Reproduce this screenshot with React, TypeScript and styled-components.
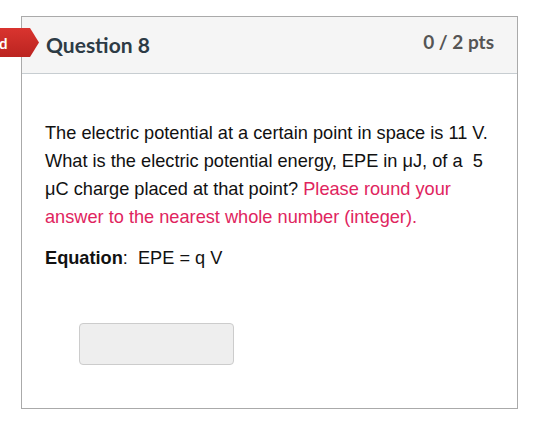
import React from 'react'
import styled, { createGlobalStyle } from 'styled-components'

const Global = createGlobalStyle`
  html, body {
    margin: 0;
    padding: 0;
    background: #fff;
  }
  body {
    font-family: "Liberation Sans", Arial, sans-serif;
  }
`

const Page = styled.div`
  position: relative;
  width: 542px;
  height: 425px;
  padding: 16px 0 0 21px;
  box-sizing: border-box;
`

// the cut-off "submitted" flag poking out of the left edge
const Badge = styled.div`
  position: absolute;
  left: 0;
  top: 28px;
  height: 29px;
  width: 39px;
  display: flex;
  align-items: center;
  box-sizing: border-box;
  background: linear-gradient(#d9342f, #bb2420);
  clip-path: polygon(0 0, 30px 0, 39px 50%, 30px 100%, 0 100%);
  color: #fff;
  font-family: Lato, sans-serif;
  font-weight: 700;
  font-size: 15px;
  text-indent: -1px;
`

const Card = styled.div`
  width: 497px;
  height: 393px;
  border: 1px solid #aaa;
  box-sizing: border-box;
  display: flex;
  flex-direction: column;
`

const Header = styled.div`
  height: 57px;
  background: #f5f5f5;
  border-bottom: 1px solid #c7cdd1;
  display: flex;
  justify-content: space-between;
  align-items: flex-start;
  padding: 0 23px 0 24px;
  box-sizing: border-box;
  font-family: Lato, sans-serif;
  font-weight: 700;
`

const Title = styled.h2`
  margin: 15px 0 0;
  font-size: 21px;
  color: #2d3b45;
  font-weight: 700;
`

const Points = styled.div`
  margin-top: 13px;
  font-size: 19px;
  color: #555;
`

const Body = styled.div`
  padding: 45px 18px 0 23px;
  font-size: 18.2px;
  line-height: 28px;
  color: #111;
`

const Para = styled.p`
  margin: 0 0 13px;
`

const Hint = styled.span`
  color: #e0245e;
`

const Answer = styled.input`
  display: block;
  margin: 51px 0 0 34px;
  width: 155px;
  height: 42px;
  box-sizing: border-box;
  background: #eee;
  border: 1px solid #ccc;
  border-radius: 4px;
`

export default function App() {
  return (
    <Page>
      <Global />
      <Badge>d</Badge>
      <Card>
        <Header>
          <Title>Question 8</Title>
          <Points>0 / 2 pts</Points>
        </Header>
        <Body>
          <Para>
            The electric potential at a certain point in space is 11 V. What is the electric
            potential energy, EPE in μJ, of a&nbsp; 5 μC charge placed at that point?{' '}
            <Hint>Please round your answer to the nearest whole number (integer).</Hint>
          </Para>
          <Para>
            <b>Equation</b>:&nbsp; EPE = q V
          </Para>
          <Answer type="text" readOnly />
        </Body>
      </Card>
    </Page>
  )
}
